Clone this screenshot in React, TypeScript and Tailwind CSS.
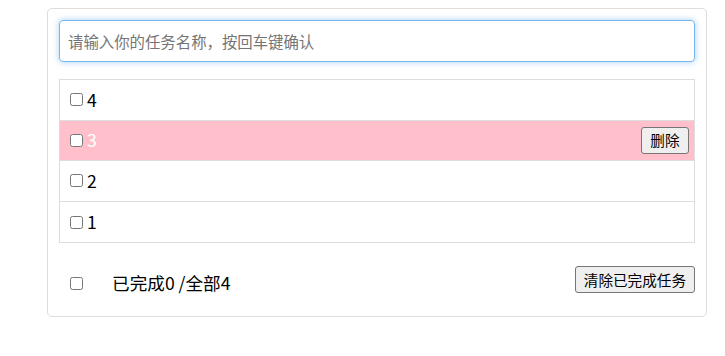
import { useState } from "react"

type Todo = { id: string; title: string; done: boolean }

const font = "font-['Microsoft_YaHei','Noto_Sans_CJK_SC',sans-serif]"

function Item({ todo, hover }: { todo: Todo; hover: boolean }) {
  return (
    <li
      className={`flex h-[40.6px] items-center justify-between border-b border-[#ddd] px-[5.5px] last:border-b-0 ${
        hover ? "bg-[#ffc0cb] text-white" : "bg-white text-black"
      }`}
    >
      <label className="flex items-center">
        <input
          type="checkbox"
          defaultChecked={todo.done}
          className="ml-[4.5px] mr-[4px] h-[13px] w-[13px]"
        />
        <span className="text-[17.6px] leading-[22px]">{todo.title}</span>
      </label>
      {hover && (
        <button className="flex h-[27px] items-center rounded-[3px] border border-[#767676] bg-[#efefef] px-[8px] text-[14.6px] leading-none text-black">
          删除
        </button>
      )}
    </li>
  )
}

export default function App() {
  const [todos] = useState<Todo[]>([
    { id: "4", title: "4", done: false },
    { id: "3", title: "3", done: false },
    { id: "2", title: "2", done: false },
    { id: "1", title: "1", done: false },
  ])
  const done = todos.filter((t) => t.done).length

  return (
    <div className={`${font} bg-white pt-[8px] pl-[47px]`}>
      <div className="w-[660px] rounded-[5px] border border-[#ddd] p-[11px]">
        <input
          type="text"
          placeholder="请输入你的任务名称，按回车键确认"
          className="h-[42px] w-full rounded-[4px] border border-[#7cb5ec] px-[8px] text-[15.4px] shadow-[0_0_6px_rgba(82,168,236,0.55)] outline-none placeholder:text-[#757575]"
        />
        <ul className="mt-[17px] border border-[#ddd]">
          {todos.map((t) => (
            <Item key={t.id} todo={t} hover={t.id === "3"} />
          ))}
        </ul>
        <div className="mt-[18px] flex h-[44px] items-start justify-between pl-[6.6px]">
          <label className="flex h-[44px] items-center">
            <input type="checkbox" className="ml-[4.5px] h-[13px] w-[13px]" />
            <span className="ml-[29px] text-[17.6px] leading-[22px] text-black">
              已完成{done} /全部{todos.length}
            </span>
          </label>
          <button className="mt-[5px] flex h-[27px] items-center rounded-[3px] border border-[#767676] bg-[#efefef] px-[8px] text-[14.6px] leading-none text-black">
            清除已完成任务
          </button>
        </div>
      </div>
    </div>
  )
}
